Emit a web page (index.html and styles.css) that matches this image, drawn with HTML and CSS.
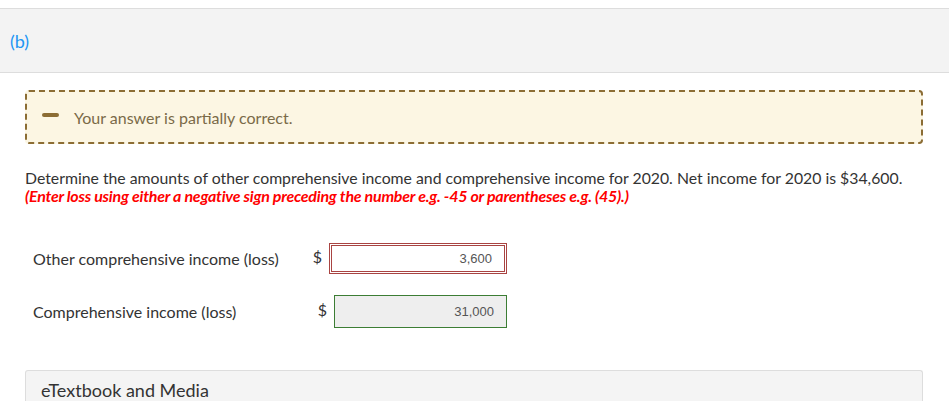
FILE: index.html
```html
<!DOCTYPE html>
<html lang="en">
<head>
<meta charset="utf-8">
<title>Part (b)</title>
<link rel="stylesheet" href="styles.css">
</head>
<body>
<div class="page">
  <div class="part-header"><span class="part-label">(b)</span></div>

  <div class="feedback">
    <span class="feedback-icon"></span>
    <span class="feedback-text">Your answer is partially correct.</span>
  </div>

  <div class="question">
    <p class="prompt">Determine the amounts of other comprehensive income and comprehensive income for 2020. Net income for 2020 is $34,600.</p>
    <p class="hint">(Enter loss using either a negative sign preceding the number e.g. -45 or parentheses e.g. (45).)</p>
  </div>

  <div class="answers">
    <div class="answer-row">
      <span class="answer-label">Other comprehensive income (loss)</span>
      <span class="answer-field">
        <span class="currency">$</span>
        <span class="input input-wrong">3,600</span>
      </span>
    </div>
    <div class="answer-row">
      <span class="answer-label">Comprehensive income (loss)</span>
      <span class="answer-field">
        <span class="currency">$</span>
        <span class="input input-right">31,000</span>
      </span>
    </div>
  </div>

  <div class="resources">
    <span class="resources-title">eTextbook and Media</span>
  </div>
</div>
</body>
</html>
```

FILE: styles.css
```css
html, body {
  margin: 0;
  padding: 0;
  background: #ffffff;
}

body {
  font-family: Lato, "Open Sans", sans-serif;
  color: #333333;
  overflow: hidden;
}

.page {
  padding-top: 8px;
}

.part-header {
  display: flex;
  align-items: center;
  height: 63px;
  padding-left: 10px;
  background: #f3f3f3;
  border-top: 1px solid #dddddd;
  border-bottom: 1px solid #dddddd;
}

.part-label {
  color: #2196f3;
  font-size: 18px;
}

.feedback {
  display: flex;
  align-items: center;
  box-sizing: border-box;
  margin: 17px 0 0 25px;
  width: 898px;
  height: 54px;
  padding-left: 15px;
  background: #fcf6e3;
  border: 2px dashed #8c6d34;
  border-radius: 4px;
}

.feedback-icon {
  display: block;
  width: 17px;
  height: 4px;
  margin-top: -4px;
  border-radius: 2px;
  background: #8c6d34;
}

.feedback-text {
  margin-left: 15px;
  font-size: 16px;
  color: #7a6a48;
}

.question {
  margin: 25px 0 0 25px;
}

.question p {
  margin: 0;
  line-height: 18px;
}

.prompt {
  font-size: 15.8px;
  color: #333333;
}

.hint {
  font-size: 16px;
  color: #ff0000;
  font-weight: bold;
  font-style: italic;
  letter-spacing: -0.25px;
}

.answers {
  display: flex;
  flex-direction: column;
  gap: 20px;
  margin: 37px 0 0 33px;
  width: 474px;
}

.answer-row {
  display: flex;
  align-items: center;
  justify-content: space-between;
  height: 33px;
}

.answer-label {
  font-size: 16px;
  color: #333333;
}

.answer-field {
  display: flex;
  align-items: center;
}

.currency {
  font-size: 16px;
  margin-right: 7px;
  margin-top: -4px;
}

.input {
  box-sizing: border-box;
  display: flex;
  align-items: center;
  justify-content: flex-end;
  padding-right: 12px;
  font-family: "Liberation Sans", Arial, sans-serif;
  font-size: 13px;
  color: #555555;
}

.input-wrong {
  width: 178px;
  height: 31px;
  border: 3px double #a94442;
  background: #ffffff;
}

.input-right {
  width: 173px;
  height: 33px;
  border: 1px solid #3c7d34;
  background: #eeeeee;
}

.resources {
  box-sizing: border-box;
  margin: 42px 0 0 25px;
  width: 898px;
  height: 31px;
  padding: 8px 0 0 15px;
  background: #f4f4f4;
  border: 1px solid #dddddd;
  border-bottom: none;
  border-radius: 3px 3px 0 0;
  overflow: hidden;
}

.resources-title {
  font-size: 18px;
  line-height: 22px;
  color: #333333;
}
```
